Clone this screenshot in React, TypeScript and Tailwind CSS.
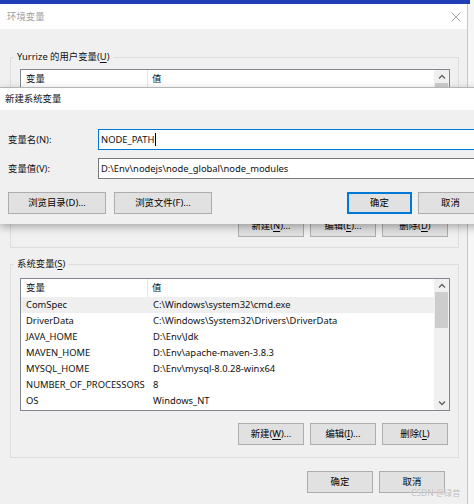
import React from 'react';

const U = ({ children }: { children: React.ReactNode }) => <span className="underline underline-offset-[1.5px]">{children}</span>;

function WinButton({
  children,
  className = '',
  primary = false,
}: {
  children: React.ReactNode;
  className?: string;
  primary?: boolean;
}) {
  return (
    <div
      className={`flex h-[22px] shrink-0 items-center justify-center border bg-[#e1e1e1] text-black ${
        primary ? 'border-[#0078d7] shadow-[inset_0_0_0_1px_#0078d7]' : 'border-[#adadad]'
      } ${className}`}
    >
      {children}
    </div>
  );
}

function GroupBox({ label, className = '', children }: { label: React.ReactNode; className?: string; children: React.ReactNode }) {
  return (
    <div className={`relative border border-[#dcdcdc] ${className}`}>
      <span className="absolute -top-[8px] left-[3px] bg-[#f0f0f0] px-[3px] leading-[14px]">{label}</span>
      {children}
    </div>
  );
}

function Chevron({ up }: { up?: boolean }) {
  return (
    <svg width="8" height="5" viewBox="0 0 8 5" className="text-[#606060]">
      <polyline
        points={up ? '1,4.5 4,1.5 7,4.5' : '1,0.5 4,3.5 7,0.5'}
        fill="none"
        stroke="currentColor"
        strokeWidth="1.3"
      />
    </svg>
  );
}

type Row = [string, string];

const systemVars: Row[] = [
  ['ComSpec', 'C:\\Windows\\system32\\cmd.exe'],
  ['DriverData', 'C:\\Windows\\System32\\Drivers\\DriverData'],
  ['JAVA_HOME', 'D:\\Env\\Jdk'],
  ['MAVEN_HOME', 'D:\\Env\\apache-maven-3.8.3'],
  ['MYSQL_HOME', 'D:\\Env\\mysql-8.0.28-winx64'],
  ['NUMBER_OF_PROCESSORS', '8'],
  ['OS', 'Windows_NT'],
];

function VarList({ rows, height, highlight }: { rows: Row[]; height: string; highlight?: number }) {
  return (
    <div className={`flex border border-[#828790] bg-white ${height}`}>
      <div className="flex-1 overflow-hidden">
        <div className="flex h-[18px] items-center">
          <div className="flex h-[18px] w-[127px] items-center border-r border-[#e5e5e5] pl-[5px]">变量</div>
          <div className="pl-[4px]">值</div>
        </div>
        {rows.map((r, i) => (
          <div key={r[0]} className={`flex h-[16px] items-center whitespace-nowrap ${i === highlight ? 'bg-[#efefef]' : ''}`}>
            <div className="w-[127px] pl-[5px]">{r[0]}</div>
            <div className="pl-[5px]">{r[1]}</div>
          </div>
        ))}
      </div>
      <div className="flex w-[15px] flex-col bg-[#f0f0f0]">
        <div className="flex h-[13px] items-center justify-center">
          <Chevron up />
        </div>
        <div className="mx-[1px] h-[36px] bg-[#cdcdcd]" />
        <div className="flex-1" />
        <div className="flex h-[13px] items-center justify-center">
          <Chevron />
        </div>
      </div>
    </div>
  );
}

export default function App() {
  return (
    <div className="relative h-[504px] w-[474px] overflow-hidden bg-[#f6f6f6] font-['Noto_Sans','Noto_Sans_CJK_SC',sans-serif] text-[9.4px] leading-none text-[#111]">
      <div className="h-[4px] w-[470px] bg-[#1f3fb5]" />
      <div className="flex">
        {/* environment variables window (behind) */}
        <div className="flex h-[500px] w-[468px] flex-col border-r border-[#c6c6c6] bg-[#f0f0f0]">
          <div className="flex h-[25px] items-center justify-between bg-white pl-[7px] pr-[6px] text-[#a0a0a0]">
            <span>环境变量</span>
            <svg width="10" height="10" viewBox="0 0 10 10">
              <path d="M0.5 0.5 L9.5 9.5 M9.5 0.5 L0.5 9.5" stroke="#a8a8a8" strokeWidth="1" />
            </svg>
          </div>
          <div className="flex-1 pl-[10px] pr-[8px] pt-[28px]">
            <GroupBox
              label={
                <>
                  Yurrize 的用户变量(<U>U</U>)
                </>
              }
            >
              <div className="ml-[9px] mr-[8px] mt-[11px]">
                <VarList rows={[]} height="h-[135px]" />
              </div>
              <div className="mr-[10px] mt-[11px] flex justify-end gap-[6px] pb-[10px]">
                <WinButton className="w-[66px]">
                  新建(<U>N</U>)...
                </WinButton>
                <WinButton className="w-[66px]">
                  编辑(<U>E</U>)...
                </WinButton>
                <WinButton className="w-[66px]">
                  删除(<U>D</U>)
                </WinButton>
              </div>
            </GroupBox>

            <GroupBox
              className="mt-[16px]"
              label={
                <>
                  系统变量(<U>S</U>)
                </>
              }
            >
              <div className="ml-[9px] mr-[8px] mt-[13px]">
                <VarList rows={systemVars} height="h-[133px]" highlight={0} />
              </div>
              <div className="mr-[10px] mt-[12px] flex justify-end gap-[6px] pb-[12px]">
                <WinButton className="w-[66px]">
                  新建(<U>W</U>)...
                </WinButton>
                <WinButton className="w-[66px]">
                  编辑(<U>I</U>)...
                </WinButton>
                <WinButton className="w-[66px]">
                  删除(<U>L</U>)
                </WinButton>
              </div>
            </GroupBox>

            <div className="mr-[14px] mt-[13px] flex justify-end gap-[6px]">
              <WinButton className="w-[66px]">确定</WinButton>
              <WinButton className="w-[66px]">取消</WinButton>
            </div>
          </div>
        </div>
      </div>

      {/* new system variable dialog (on top) */}
      <div className="absolute left-0 top-[87px] flex h-[137px] w-[500px] flex-col border-t border-[#b5b5b5] shadow-[0_3px_8px_rgba(0,0,0,0.3)]">
        <div className="flex h-[22px] items-center bg-white pl-[5px]">新建系统变量</div>
        <div className="flex-1 bg-[#f0f0f0] pl-[8px] pt-[19px]">
          <div className="flex h-[21px] items-center">
            <div className="w-[90px]">变量名(N):</div>
            <div className="flex h-[21px] flex-1 items-center border border-[#0078d7] bg-white pl-[2px]">
              NODE_PATH
              <span className="ml-[1px] h-[13px] w-[1px] bg-black" />
            </div>
          </div>
          <div className="mt-[8px] flex h-[21px] items-center">
            <div className="w-[90px]">变量值(V):</div>
            <div className="flex h-[21px] flex-1 items-center border border-[#7a7a7a] bg-white pl-[2px]">
              D:\Env\nodejs\node_global\node_modules
            </div>
          </div>
          <div className="mt-[13px] flex">
            <WinButton className="w-[98px]">浏览目录(D)...</WinButton>
            <WinButton className="ml-[8px] w-[98px]">浏览文件(F)...</WinButton>
            <WinButton primary className="ml-[135px] w-[65px]">
              确定
            </WinButton>
            <WinButton className="ml-[6px] w-[65px]">取消</WinButton>
          </div>
        </div>
      </div>

      <div className="absolute left-[411px] top-[489px] text-[8.5px] text-[#bdbdbd] [text-shadow:0_0_2px_#ffffff]">CSDN @绿昔</div>
    </div>
  );
}
